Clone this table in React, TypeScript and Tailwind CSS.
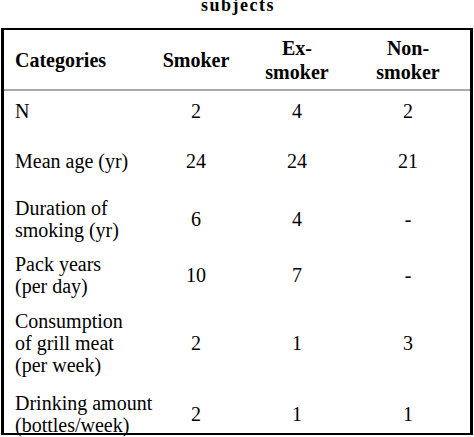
import React from "react";

const serif = { fontFamily: '"Liberation Serif", "Times New Roman", serif' };

type Row = { label: string[]; vals: string[]; mt: string };

const rows: Row[] = [
  { label: ["N"], vals: ["2", "4", "2"], mt: "mt-[9px]" },
  { label: ["Mean age (yr)"], vals: ["24", "24", "21"], mt: "mt-[28px]" },
  { label: ["Duration of", "smoking (yr)"], vals: ["6", "4", "-"], mt: "mt-[25px]" },
  { label: ["Pack years", "(per day)"], vals: ["10", "7", "-"], mt: "mt-[12px]" },
  { label: ["Consumption", "of grill meat", "(per week)"], vals: ["2", "1", "3"], mt: "mt-[13px]" },
  { label: ["Drinking amount", "(bottles/week)"], vals: ["2", "1", "1"], mt: "mt-[16px]" },
];

export default function App() {
  return (
    <div className="w-[474px] h-[437px] bg-white text-black overflow-hidden" style={serif}>
      <div className="h-[28px] overflow-hidden flex justify-center">
        <div className="mt-[-4px] text-[18px] leading-[18px] font-bold tracking-[1.5px] pl-[2px]">subjects</div>
      </div>
      <div className="ml-[1px] w-[472px] h-[407px] border-t-2 border-b-2 border-l-[3px] border-r-[3px] border-black">
        <div className="grid grid-cols-[143px_98px_104px_1fr] h-[59px] items-center text-[20px] leading-[24px] font-bold">
          <div className="pl-[11px]">Categories</div>
          <div className="text-center">Smoker</div>
          <div className="text-center">
            <div>Ex-</div>
            <div>smoker</div>
          </div>
          <div className="text-center pr-[3px]">
            <div>Non-</div>
            <div>smoker</div>
          </div>
        </div>
        <div className="h-[2px] bg-[#aaaaaa]" />
        <div className="text-[20px] leading-[22px]">
          {rows.map((r, i) => (
            <div key={i} className={`grid grid-cols-[143px_98px_104px_1fr] items-center ${r.mt}`}>
              <div className="pl-[11px] whitespace-nowrap">
                {r.label.map((l, j) => (
                  <div key={j}>{l}</div>
                ))}
              </div>
              <div className="text-center">{r.vals[0]}</div>
              <div className="text-center">{r.vals[1]}</div>
              <div className="text-center pr-[3px]">{r.vals[2]}</div>
            </div>
          ))}
        </div>
      </div>
    </div>
  );
}
